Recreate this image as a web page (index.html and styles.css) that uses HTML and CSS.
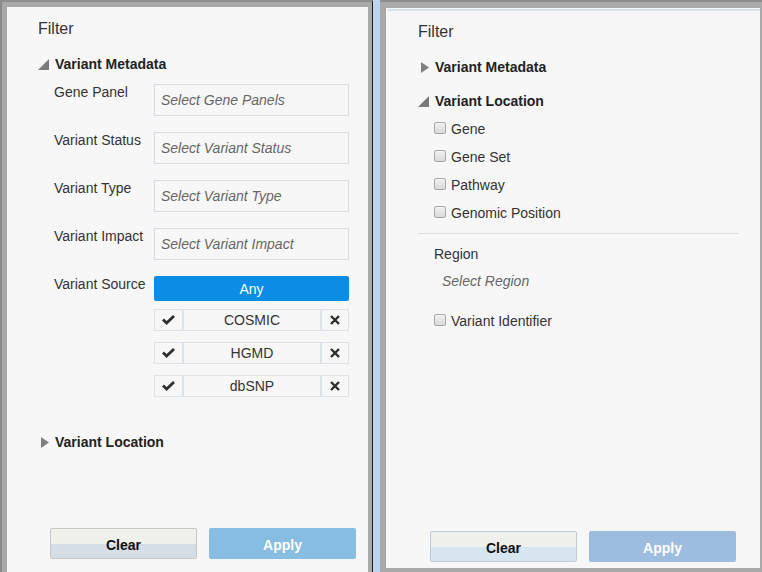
FILE: index.html
```html
<!DOCTYPE html>
<html lang="en">
<head>
<meta charset="utf-8">
<title>Filter</title>
<link rel="stylesheet" href="styles.css">
</head>
<body>
<div class="screen">
  <div class="frame frame-left">
    <div class="panel panel-left">
      <div class="title">Filter</div>
      <div class="head head-first">
        <svg class="tri" width="11" height="11" viewBox="0 0 11 11"><polygon points="11,0 11,11 0,11" fill="#7a7a7a"/></svg>
        <span>Variant Metadata</span>
      </div>
      <div class="form">
        <div class="row"><div class="label">Gene Panel</div><div class="input">Select Gene Panels</div></div>
        <div class="row"><div class="label">Variant Status</div><div class="input">Select Variant Status</div></div>
        <div class="row"><div class="label">Variant Type</div><div class="input">Select Variant Type</div></div>
        <div class="row"><div class="label">Variant Impact</div><div class="input">Select Variant Impact</div></div>
        <div class="row">
          <div class="label">Variant Source</div>
          <div class="source">
            <div class="any">Any</div>
            <div class="bset first">
              <div class="cell ck"><svg width="13" height="10" viewBox="0 0 13 10"><polyline points="1,4.6 4.6,8 12,1" fill="none" stroke="#2e2e2e" stroke-width="2.8"/></svg></div>
              <div class="cell lbl">COSMIC</div>
              <div class="cell x"><svg width="10" height="10" viewBox="0 0 10 10"><path d="M1 1 L9 9 M9 1 L1 9" stroke="#2e2e2e" stroke-width="2.4"/></svg></div>
            </div>
            <div class="bset">
              <div class="cell ck"><svg width="13" height="10" viewBox="0 0 13 10"><polyline points="1,4.6 4.6,8 12,1" fill="none" stroke="#2e2e2e" stroke-width="2.8"/></svg></div>
              <div class="cell lbl">HGMD</div>
              <div class="cell x"><svg width="10" height="10" viewBox="0 0 10 10"><path d="M1 1 L9 9 M9 1 L1 9" stroke="#2e2e2e" stroke-width="2.4"/></svg></div>
            </div>
            <div class="bset">
              <div class="cell ck"><svg width="13" height="10" viewBox="0 0 13 10"><polyline points="1,4.6 4.6,8 12,1" fill="none" stroke="#2e2e2e" stroke-width="2.8"/></svg></div>
              <div class="cell lbl">dbSNP</div>
              <div class="cell x"><svg width="10" height="10" viewBox="0 0 10 10"><path d="M1 1 L9 9 M9 1 L1 9" stroke="#2e2e2e" stroke-width="2.4"/></svg></div>
            </div>
          </div>
        </div>
      </div>
      <div class="head head-loc-left">
        <svg class="tri" width="11" height="11" viewBox="0 0 11 11"><polygon points="3,0 11,5.5 3,11" fill="#808080"/></svg>
        <span>Variant Location</span>
      </div>
      <div class="actions">
        <div class="btn clear clear-left">Clear</div>
        <div class="btn apply apply-left">Apply</div>
      </div>
    </div>
  </div>
  <div class="strip"></div>
  <div class="frame frame-right">
    <div class="panel panel-right">
      <div class="topline"></div>
      <div class="panel-body">
        <div class="title">Filter</div>
        <div class="head head-first">
          <svg class="tri" width="11" height="11" viewBox="0 0 11 11"><polygon points="3,0 11,5.5 3,11" fill="#808080"/></svg>
          <span>Variant Metadata</span>
        </div>
        <div class="head head-next">
          <svg class="tri" width="11" height="11" viewBox="0 0 11 11"><polygon points="11,0 11,11 0,11" fill="#7a7a7a"/></svg>
          <span>Variant Location</span>
        </div>
        <div class="checks">
          <div class="check"><span class="cb"></span><span>Gene</span></div>
          <div class="check"><span class="cb"></span><span>Gene Set</span></div>
          <div class="check"><span class="cb"></span><span>Pathway</span></div>
          <div class="check"><span class="cb"></span><span>Genomic Position</span></div>
        </div>
        <div class="divider"></div>
        <div class="region">Region</div>
        <div class="region-ph">Select Region</div>
        <div class="check ident"><span class="cb"></span><span>Variant Identifier</span></div>
        <div class="actions">
          <div class="btn clear clear-right">Clear</div>
          <div class="btn apply apply-right">Apply</div>
        </div>
      </div>
    </div>
  </div>
</div>
</body>
</html>
```

FILE: styles.css
```css
* { box-sizing: border-box; }
html, body { margin: 0; padding: 0; }
body {
  width: 762px;
  height: 572px;
  overflow: hidden;
  background: #a9a9a9;
  font-family: "Liberation Sans", Arial, sans-serif;
  color: #333;
}
.screen { display: flex; height: 572px; }

.frame { display: flex; background: #a9a9a9; border-top: 2px solid #8e8e8e; }
.frame-left {
  width: 373px;
  height: 572px;
  border-left: 2px solid #8a8a8a;
  border-right: 1px solid #1e1e1e;
  padding: 5px 4px 0 5px;
}
.strip { width: 7px; height: 572px; background: #bcd4ee; }
.frame-right {
  width: 382px;
  height: 572px;
  padding: 6px 2px 4px 6px;
}

.panel { flex: 1; background: #f7f7f7; display: flex; flex-direction: column; }
.panel-left { padding: 11px 0 13px 31px; }
.topline { margin: 1px 0 0 2px; height: 2px; background: #d6e3f1; }
.panel-body { flex: 1; display: flex; flex-direction: column; padding: 10px 0 6px 32px; }

.title { font-size: 16px; line-height: 20px; height: 20px; color: #333; margin-top: 1px; }

.head {
  display: flex;
  align-items: center;
  gap: 6px;
  font-size: 14px;
  font-weight: bold;
  line-height: 17px;
  height: 17px;
  color: #222;
}
.head .tri { flex: none; }
.head-first { margin-top: 17px; }
.head-next { margin-top: 17px; }
.head-loc-left { margin-top: 37px; }

.form { margin-top: 11px; margin-left: 16px; display: flex; flex-direction: column; gap: 16px; }
.row { display: flex; }
.label { width: 100px; font-size: 14px; line-height: 17px; color: #333; }
.input {
  width: 195px;
  height: 32px;
  border: 1px solid #d6dce3;
  padding: 0 6px;
  display: flex;
  align-items: center;
  font-size: 14px;
  font-style: italic;
  color: #666;
}
.source { width: 195px; display: flex; flex-direction: column; }
.any {
  height: 25px;
  background: #0b8de6;
  color: #fff;
  border-radius: 2px;
  display: flex;
  align-items: center;
  justify-content: center;
  font-size: 14px;
}
.bset { display: flex; height: 22px; margin-top: 11px; }
.bset.first { margin-top: 8px; }
.cell {
  border: 1px solid #dde2e8;
  display: flex;
  align-items: center;
  justify-content: center;
  font-size: 14px;
  color: #333;
}
.cell.ck { width: 29px; }
.cell.lbl { width: 138px; }
.cell.x { width: 28px; }

.actions { margin-top: auto; margin-left: 12px; display: flex; gap: 12px; }
.btn {
  width: 147px;
  height: 31px;
  border-radius: 2px;
  display: flex;
  align-items: center;
  justify-content: center;
  font-size: 14px;
  font-weight: bold;
  padding-top: 2px;
}
.clear { color: #111; }
.clear-left {
  border: 1px solid #c6c6c6;
  background: linear-gradient(to bottom, #f1f1eb 0%, #f1f1eb 50%, #d5dde6 53%, #d5dde6 100%);
}
.clear-right {
  border: 1px solid #bdcbdb;
  background: linear-gradient(to bottom, #f1f1eb 0%, #f1f1eb 50%, #d6e5ef 53%, #d6e5ef 100%);
}
.apply { color: #fff; }
.apply-left { background: #87bde0; }
.apply-right { background: #9dbde0; }

.checks { margin-top: 11px; margin-left: 16px; display: flex; flex-direction: column; gap: 11px; }
.check { display: flex; align-items: flex-start; gap: 5px; font-size: 14px; line-height: 17px; color: #333; }
.cb {
  flex: none;
  width: 12px;
  height: 12px;
  margin-top: 1px;
  border: 1px solid #a8a8a8;
  border-radius: 2px;
  background: linear-gradient(to bottom, #f2f2f2, #d9d9d9);
}
.divider { margin-top: 11px; margin-right: 21px; height: 1px; background: #d5dde5; }
.region { margin-top: 12px; margin-left: 16px; font-size: 14px; line-height: 17px; color: #333; }
.region-ph { margin-top: 10px; margin-left: 24px; font-size: 14px; line-height: 17px; font-style: italic; color: #666; }
.ident { margin-top: 23px; margin-left: 16px; }
```
